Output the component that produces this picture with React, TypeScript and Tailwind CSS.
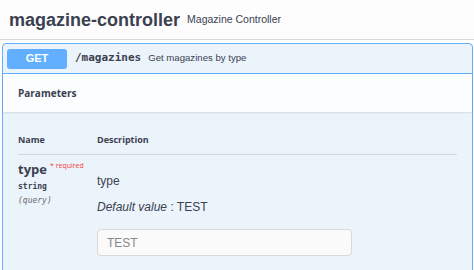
export default function App() {
  return (
    <div className="w-[474px] h-[270px] overflow-hidden bg-white" style={{ fontFamily: '"Liberation Sans", Arial, sans-serif' }}>
      <div className="h-[40px] border-b border-[#d5d9dc] flex items-center pl-[9px] bg-[#fdfdfd]">
        <span className="text-[18px] font-bold text-[#3b4151] leading-none">magazine-controller</span>
        <span className="ml-[7px] text-[10.5px] text-[#3b4151] mt-[1px]">Magazine Controller</span>
      </div>
      <div className="mt-[3px] ml-[2px] w-[471px] h-[300px] border border-[#61affe] rounded-[4px] bg-[#ebf3fb]">
        <div className="h-[30px] flex items-center px-[4px] border-b border-[#61affe]">
          <div className="w-[60px] h-[20px] rounded-[3px] bg-[#61affe] text-white text-[11px] font-bold flex items-center justify-center">GET</div>
          <span className="ml-[8px] text-[11px] font-bold text-[#3b4151]" style={{ fontFamily: '"DejaVu Sans Mono", monospace' }}>/magazines</span>
          <span className="ml-[7px] text-[9.6px] text-[#3b4151]">Get magazines by type</span>
        </div>
        <div className="h-[38px] bg-white/80 shadow-[0_1px_2px_rgba(0,0,0,0.1)] flex items-center pl-[15px]">
          <span className="text-[10px] font-bold text-[#3b4151]" style={{ fontFamily: '"Open Sans", sans-serif' }}>Parameters</span>
        </div>
        <div className="px-[15px]" style={{ fontFamily: '"Open Sans", sans-serif' }}>
          <div className="h-[43px] flex items-end pb-[8px] border-b border-[#d1d8e0] text-[9px] font-bold text-[#3b4151]">
            <span className="w-[79px]">Name</span>
            <span>Description</span>
          </div>
          <div className="flex pt-[5px]">
            <div className="w-[79px]">
              <div className="flex items-start">
                <span className="text-[13px] font-bold text-[#3b4151] leading-[18px]">type</span>
                <span className="ml-[3px] text-[7px] text-[#f93e3e] leading-[10px] mt-[1px]">* required</span>
              </div>
              <div className="text-[8px] font-semibold text-[#3b4151] mt-[3px]" style={{ fontFamily: '"DejaVu Sans Mono", monospace' }}>string</div>
              <div className="text-[8px] italic text-[#6b6b6b] mt-[2px]" style={{ fontFamily: '"DejaVu Sans Mono", monospace' }}>(query)</div>
            </div>
            <div className="pt-[12px]" style={{ fontFamily: '"Liberation Sans", Arial, sans-serif' }}>
              <div className="text-[12px] text-[#3b4151]">type</div>
              <div className="text-[12px] text-[#3b4151] mt-[8px]"><i>Default value</i> : TEST</div>
              <div className="mt-[13px] w-[255px] h-[27px] border border-[#d9d9d9] rounded-[4px] bg-[#fafafa] flex items-center pl-[9px] text-[12px] text-[#888]">TEST</div>
            </div>
          </div>
        </div>
      </div>
    </div>
  );
}
